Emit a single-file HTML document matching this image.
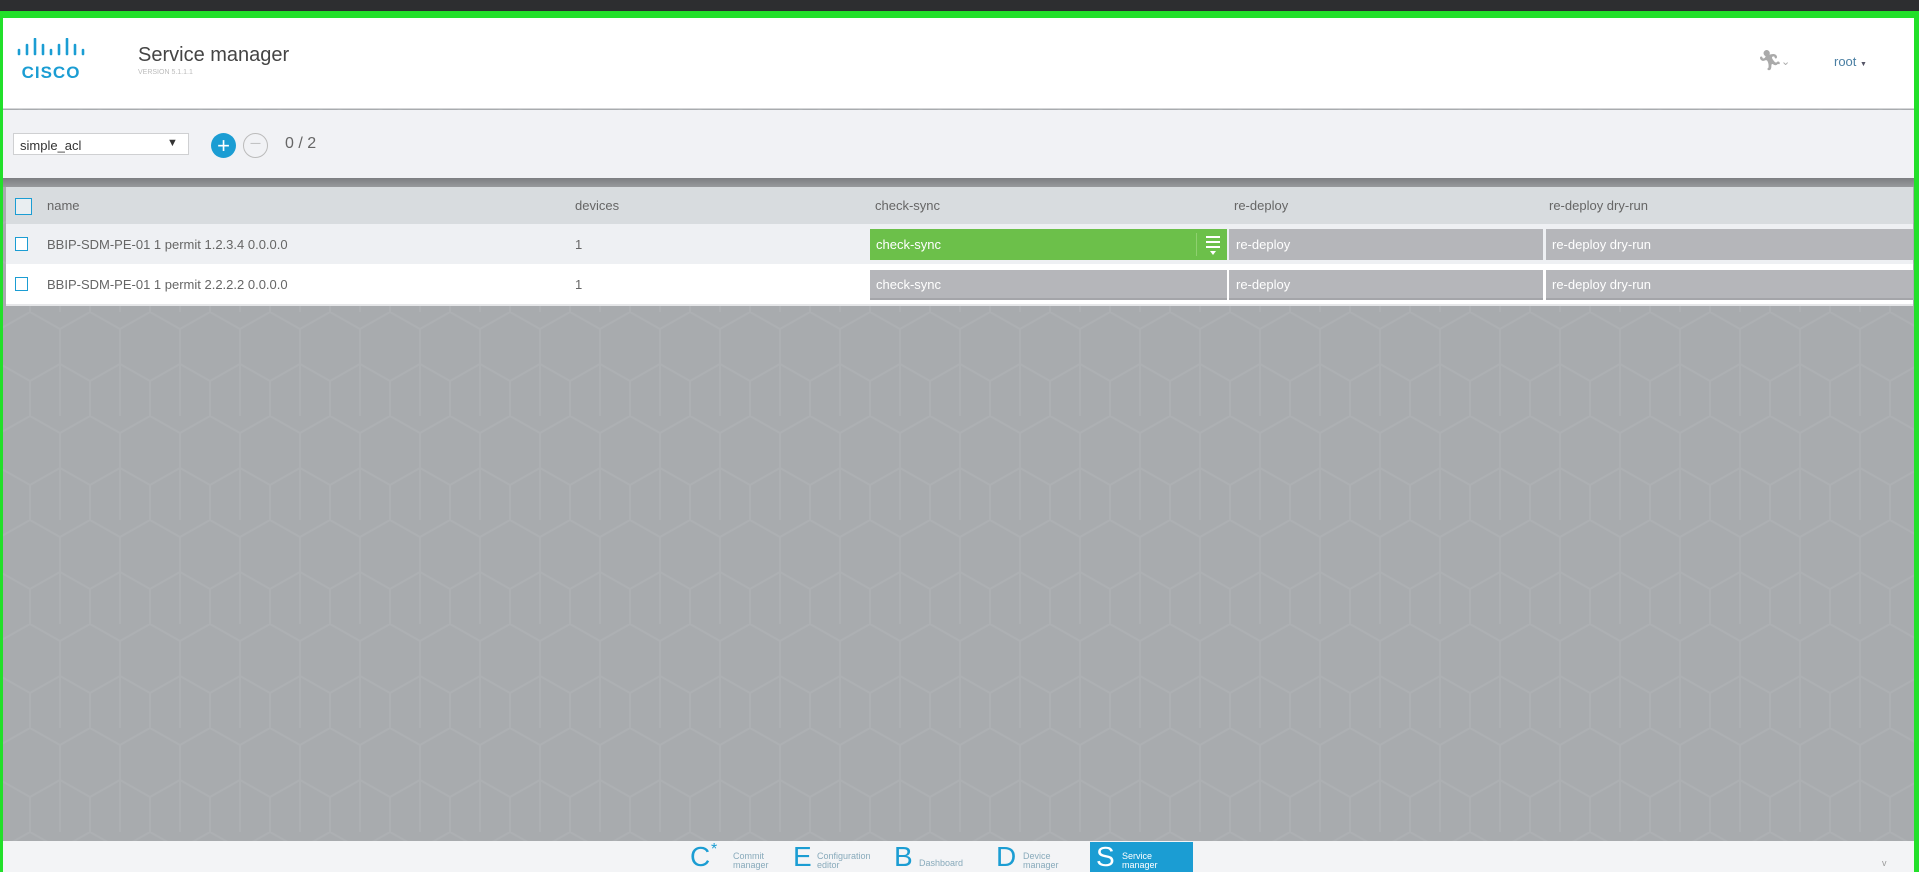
<!DOCTYPE html>
<html><head><meta charset="utf-8"><style>
*{margin:0;padding:0;box-sizing:border-box}
body{width:1919px;height:872px;overflow:hidden;font-family:"Liberation Sans",sans-serif;background:#a9acaf;position:relative}
.abs{position:absolute}
.t{font-size:13px;color:#666}
</style></head><body>
<svg class="abs" style="left:0;top:0" width="1919" height="872">
<defs><pattern id="hx" width="60" height="104" patternUnits="userSpaceOnUse">
<path d="M30 0 L60 17 L60 52 L30 69 L0 52 L0 17 Z M30 69 L30 104 M0 52 L0 104 M60 52 L60 104" fill="none" stroke="#adb0b3" stroke-width="2"/>
</pattern></defs>
<rect width="1919" height="872" fill="#a8abae"/>
<rect width="1919" height="872" fill="url(#hx)"/>
</svg>
<div class="abs" style="left:0;top:0;width:1919px;height:11px;background:#2d2e30"></div>
<div class="abs" style="left:0;top:11px;width:1919px;height:7px;background:#22e02a"></div>
<div class="abs" style="left:0;top:11px;width:3px;height:861px;background:#22e02a"></div>
<div class="abs" style="left:1914px;top:11px;width:5px;height:861px;background:#22e02a"></div>
<div class="abs" style="left:3px;top:18px;width:1911px;height:91px;background:#fff;border-bottom:1px solid #d5d6d8"></div>
<svg class="abs" style="left:16px;top:38px" width="72" height="46">
<g stroke="#1b9dd3" stroke-width="2.6" stroke-linecap="round">
<line x1="3" y1="12" x2="3" y2="16"/><line x1="11" y1="7" x2="11" y2="16"/><line x1="19" y1="1" x2="19" y2="16"/><line x1="27" y1="7" x2="27" y2="16"/><line x1="35" y1="12" x2="35" y2="16"/><line x1="43" y1="7" x2="43" y2="16"/><line x1="51" y1="1" x2="51" y2="16"/><line x1="59" y1="7" x2="59" y2="16"/><line x1="67" y1="12" x2="67" y2="16"/>
</g>
<text x="35" y="40" text-anchor="middle" font-family="Liberation Sans" font-weight="bold" font-size="17" fill="#1b9dd3" letter-spacing="1">CISCO</text>
</svg>
<div class="abs" style="left:138px;top:44px;font-size:20px;color:#444">Service manager</div>
<div class="abs" style="left:138px;top:69px;font-size:7px;color:#bbb">VERSION 5.1.1.1</div>
<div class="abs" style="left:1757px;top:48px;font-size:20px;color:#aaa">&#x1F3C3;&#xFE0E;</div>
<div class="abs" style="left:1781px;top:55px;font-size:11px;color:#aaa">&#x2304;</div>
<div class="abs" style="left:1834px;top:54px;font-size:13px;color:#4a7fa3">root <span style="font-size:7px;color:#556">▼</span></div>
<div class="abs" style="left:3px;top:110px;width:1911px;height:68px;background:#f1f2f5"></div>
<div class="abs" style="left:3px;top:178px;width:1911px;height:9px;background:linear-gradient(#7d7f82,#989a9d)"></div>
<div class="abs" style="left:13px;top:133px;width:176px;height:22px;background:#fff;border:1px solid #cfd0d2;font-size:13px;color:#333;padding:4px 0 0 6px">simple_acl<span style="position:absolute;left:153px;top:3px;font-size:11px">▼</span></div>
<div class="abs" style="left:211px;top:133px;width:25px;height:25px;border-radius:50%;background:#1b9dd3;color:#fff;font-size:22px;line-height:25px;text-align:center">+</div>
<div class="abs" style="left:243px;top:133px;width:25px;height:25px;border-radius:50%;border:1px solid #bbb;color:#aaa;font-size:10px;line-height:20px;text-align:center">—</div>
<div class="abs" style="left:285px;top:135px;font-size:16px;color:#666">0 / 2</div>
<div class="abs" style="left:6px;top:187px;width:1907px;height:37px;background:#d8dcdf"></div>
<div class="abs" style="left:6px;top:224px;width:1907px;height:40px;background:#eef0f3"></div>
<div class="abs" style="left:6px;top:264px;width:1907px;height:42px;background:#fff;border-bottom:2px solid #e5e6e8"></div>
<div class="abs" style="left:15px;top:198px;width:17px;height:17px;border:1px solid #1b9dd3;background:#e9eef1"></div>
<div class="abs" style="left:15px;top:237px;width:13px;height:14px;border:1px solid #1b9dd3;background:#fff"></div>
<div class="abs" style="left:15px;top:277px;width:13px;height:14px;border:1px solid #1b9dd3;background:#fff"></div>
<div class="abs t" style="left:47px;top:198px">name</div>
<div class="abs t" style="left:575px;top:198px">devices</div>
<div class="abs t" style="left:875px;top:198px">check-sync</div>
<div class="abs t" style="left:1234px;top:198px">re-deploy</div>
<div class="abs t" style="left:1549px;top:198px">re-deploy dry-run</div>
<div class="abs t" style="left:47px;top:237px">BBIP-SDM-PE-01 1 permit 1.2.3.4 0.0.0.0</div>
<div class="abs t" style="left:575px;top:237px">1</div>
<div class="abs t" style="left:47px;top:277px">BBIP-SDM-PE-01 1 permit 2.2.2.2 0.0.0.0</div>
<div class="abs t" style="left:575px;top:277px">1</div>
<div class="abs" style="left:870px;top:229px;width:357px;height:31px;background:#6cc04a;color:#fff;font-size:13px;padding:8px 6px"><span>check-sync</span>
<div class="abs" style="left:326px;top:4px;width:1px;height:23px;background:#8fd06f"></div>
<svg class="abs" style="left:334px;top:5px" width="18" height="22"><g stroke="#fff" stroke-width="2"><line x1="2" y1="3" x2="16" y2="3"/><line x1="2" y1="8" x2="16" y2="8"/><line x1="2" y1="13" x2="16" y2="13"/></g><path d="M6 17 L12 17 L9 21Z" fill="#fff"/></svg></div>
<div class="abs" style="left:1229px;top:229px;width:314px;height:31px;background:#b5b6ba;color:#fff;font-size:13px;padding:8px 7px">re-deploy</div>
<div class="abs" style="left:1546px;top:229px;width:367px;height:31px;background:#b5b6ba;color:#fff;font-size:13px;padding:8px 6px">re-deploy dry-run</div>
<div class="abs" style="left:870px;top:270px;width:357px;height:30px;background:#b5b6ba;color:#fff;font-size:13px;padding:7px 6px;border-bottom:2px solid #a4a5a9">check-sync</div>
<div class="abs" style="left:1229px;top:270px;width:314px;height:30px;background:#b5b6ba;color:#fff;font-size:13px;padding:7px 7px;border-bottom:2px solid #a4a5a9">re-deploy</div>
<div class="abs" style="left:1546px;top:270px;width:367px;height:30px;background:#b5b6ba;color:#fff;font-size:13px;padding:7px 6px;border-bottom:2px solid #a4a5a9">re-deploy dry-run</div>
<div class="abs" style="left:3px;top:841px;width:1911px;height:31px;background:#f3f4f6"></div>
<div class="abs" style="left:690px;top:842px;font-size:28px;color:#1b9dd3;line-height:30px">C</div>
<div class="abs" style="left:711px;top:841px;font-size:16px;color:#1b9dd3">*</div>
<div class="abs" style="left:733px;top:852px;font-size:9px;color:#8ab;line-height:9px">Commit<br>manager</div>
<div class="abs" style="left:793px;top:842px;font-size:28px;color:#1b9dd3;line-height:30px">E</div>
<div class="abs" style="left:817px;top:852px;font-size:9px;color:#8ab;line-height:9px">Configuration<br>editor</div>
<div class="abs" style="left:894px;top:842px;font-size:28px;color:#1b9dd3;line-height:30px">B</div>
<div class="abs" style="left:919px;top:858px;font-size:9px;color:#8ab">Dashboard</div>
<div class="abs" style="left:996px;top:842px;font-size:28px;color:#1b9dd3;line-height:30px">D</div>
<div class="abs" style="left:1023px;top:852px;font-size:9px;color:#8ab;line-height:9px">Device<br>manager</div>
<div class="abs" style="left:1090px;top:842px;width:103px;height:30px;background:#1b9dd3"></div>
<div class="abs" style="left:1096px;top:842px;font-size:28px;color:#fff;line-height:30px">S</div>
<div class="abs" style="left:1122px;top:852px;font-size:9px;color:#fff;line-height:9px">Service<br>manager</div>
<div class="abs" style="left:1882px;top:858px;font-size:9px;color:#999">v</div>
</body></html>
